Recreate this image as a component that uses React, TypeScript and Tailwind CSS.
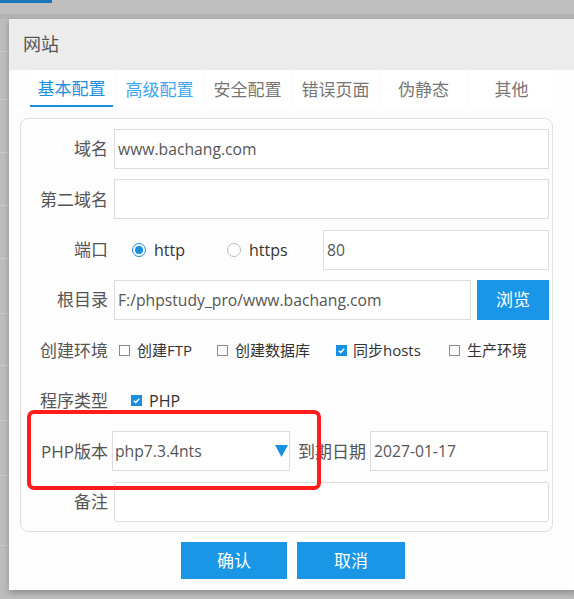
import React from "react";

const FONT = "font-['Open_Sans','Noto_Sans_CJK_SC',sans-serif]";

const tabs = ["基本配置", "高级配置", "安全配置", "错误页面", "伪静态", "其他"];
const stripRows = [33, 48, 53, 53, 53, 55, 52, 55, 55, 70];

function Box({ checked }: { checked?: boolean }) {
  if (checked) {
    return (
      <span className="w-[11px] h-[11px] bg-[#1a8fe0] flex items-center justify-center shrink-0">
        <svg width="9" height="9" viewBox="0 0 10 10">
          <path d="M2 5.2 L4.2 7.2 L8 3" stroke="#fff" strokeWidth="1.6" fill="none" />
        </svg>
      </span>
    );
  }
  return <span className="w-[11px] h-[11px] border border-[#8a8a8a] bg-white shrink-0" />;
}

function Label({ children }: { children: React.ReactNode }) {
  return (
    <div className="w-[87px] mr-[6px] text-right text-[17px] text-[#555] shrink-0 whitespace-nowrap">
      {children}
    </div>
  );
}

function Field({ value, className }: { value?: string; className: string }) {
  return (
    <div className={`h-10 border border-[#dcdcdc] bg-white flex items-center pl-[3px] pt-[1px] text-[15.7px] text-[#555] ${className}`}>
      {value}
    </div>
  );
}

export default function App() {
  return (
    <div className={`relative w-[574px] h-[599px] overflow-hidden bg-[#bdbdbd] ${FONT}`}>
      <div className="h-[14px] bg-[#bfbfbf]">
        <div className="w-[52px] h-[3px] bg-[#1a75bb]" />
      </div>
      <div className="h-[5px] bg-[#b3b3b3]" />

      <div className="flex">
        {/* page behind the dialog */}
        <div className="w-[9px] shrink-0 flex flex-col">
          {stripRows.map((h, i) => (
            <div key={i} className="border-b border-[#cbcbcb]" style={{ height: h }} />
          ))}
        </div>

        {/* dialog */}
        <div className="w-[568px] h-[571px] shrink-0 bg-[#fdfdfd] shadow-[0_3px_6px_rgba(0,0,0,0.25)] flex flex-col">
          <div className="h-[51px] bg-[#ececec] flex items-center pl-[14px] text-[18px] text-[#555]">网站</div>

          <div className="flex gap-[5px] pl-[21px] h-[37px]">
            {tabs.map((t, i) => (
              <div
                key={t}
                className={`w-[83px] flex items-center justify-center pt-[3px] text-[17px] bg-white ${
                  i === 0
                    ? "text-[#1a8fe0] border-b-2 border-[#1a8fe0]"
                    : i === 1
                    ? "text-[#3ea6f2]"
                    : "text-[#777]"
                }`}
              >
                {t}
              </div>
            ))}
          </div>

          {/* form panel */}
          <div className="ml-[11px] mt-[11px] w-[533px] h-[414px] border border-[#e0e0e0] rounded-[8px] pt-[10px] flex flex-col gap-[10.4px]">
            <div className="flex items-center h-10">
              <Label>域名</Label>
              <Field value="www.bachang.com" className="w-[435px]" />
            </div>
            <div className="flex items-center h-10">
              <Label>第二域名</Label>
              <Field className="w-[435px]" />
            </div>
            <div className="flex items-center h-10">
              <Label>端口</Label>
              <div className="w-[209px] flex items-center pl-[18px] text-[16px] text-[#333]">
                <div className="w-[95px] flex items-center gap-[8px]">
                  <span className="w-[14px] h-[14px] rounded-full border border-[#1a8fe0] flex items-center justify-center">
                    <span className="w-[8px] h-[8px] rounded-full bg-[#1a8fe0]" />
                  </span>
                  http
                </div>
                <div className="flex items-center gap-[8px]">
                  <span className="w-[14px] h-[14px] rounded-full border border-[#bbb] bg-white" />
                  https
                </div>
              </div>
              <Field value="80" className="w-[226px]" />
            </div>
            <div className="flex items-center h-10">
              <Label>根目录</Label>
              <Field value="F:/phpstudy_pro/www.bachang.com" className="w-[357px]" />
              <button className="ml-[6px] w-[72px] h-10 bg-[#1a96e6] text-white text-[17px]">浏览</button>
            </div>
            <div className="flex items-center h-10 text-[15px] text-[#333]">
              <Label>创建环境</Label>
              <div className="flex items-center pl-[5px]">
                <div className="w-[98px] flex items-center gap-[7px]">
                  <Box />
                  创建FTP
                </div>
                <div className="w-[119px] flex items-center gap-[7px]">
                  <Box />
                  创建数据库
                </div>
                <div className="w-[113px] flex items-center gap-[6px]">
                  <Box checked />
                  同步hosts
                </div>
                <div className="flex items-center gap-[7px]">
                  <Box />
                  生产环境
                </div>
              </div>
            </div>
            <div className="flex items-center h-10 text-[16px] text-[#333]">
              <Label>程序类型</Label>
              <div className="flex items-center gap-[7px] pl-[17px]">
                <Box checked />
                PHP
              </div>
            </div>
            <div className="flex items-center h-10">
              <Label>PHP版本</Label>
              <div className="-ml-[2px] w-[178px] h-10 border border-[#dcdcdc] bg-white flex items-center justify-between pl-[2px] pr-[1px] text-[15.7px] text-[#555]">
                php7.3.4nts
                <svg width="13" height="12" viewBox="0 0 13 12">
                  <polygon points="0,0 13,0 6.5,12" fill="#1a8fe0" />
                </svg>
              </div>
              <div className="ml-[8px] mr-[4px] text-[17px] text-[#555] whitespace-nowrap">到期日期</div>
              <Field value="2027-01-17" className="w-[178px]" />
            </div>
            <div className="flex items-center h-10">
              <Label>备注</Label>
              <Field className="w-[435px] rounded-[3px]" />
            </div>
          </div>

          <div className="mt-[10px] flex justify-center gap-[10px]">
            <button className="w-[106px] h-[37px] bg-[#1a96e6] text-white text-[17px]">确认</button>
            <button className="w-[108px] h-[37px] bg-[#1a96e6] text-white text-[17px]">取消</button>
          </div>
        </div>
      </div>

      {/* red annotation box */}
      <div className="absolute left-[27px] top-[410px] w-[294px] h-[80px] border-4 border-[#ff1c1c] rounded-[7px]" />
    </div>
  );
}
